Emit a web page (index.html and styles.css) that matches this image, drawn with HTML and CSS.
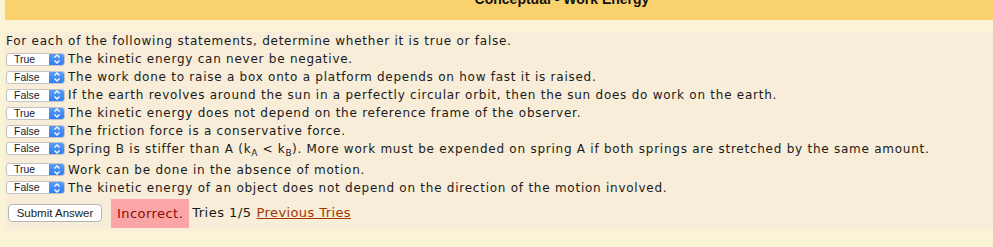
FILE: index.html
```html
<!DOCTYPE html>
<html>
<head>
<meta charset="utf-8">
<link rel="stylesheet" href="styles.css">
</head>
<body>
<div class="header"><h1>Conceptual - Work Energy</h1></div>
<div class="panel">
  <div class="intro">For each of the following statements, determine whether it is true or false.</div>
  <div class="row"><span class="sel"><span class="val">True</span><span class="arr"><svg viewBox="0 0 8 12" width="8" height="12"><path d="M1.5 4.5 L4 2 L6.5 4.5 M1.5 7.5 L4 10 L6.5 7.5" fill="none" stroke="#fff" stroke-width="1.3"/></svg></span></span><span class="txt">The kinetic energy can never be negative.</span></div>
  <div class="row"><span class="sel"><span class="val">False</span><span class="arr"><svg viewBox="0 0 8 12" width="8" height="12"><path d="M1.5 4.5 L4 2 L6.5 4.5 M1.5 7.5 L4 10 L6.5 7.5" fill="none" stroke="#fff" stroke-width="1.3"/></svg></span></span><span class="txt">The work done to raise a box onto a platform depends on how fast it is raised.</span></div>
  <div class="row"><span class="sel"><span class="val">False</span><span class="arr"><svg viewBox="0 0 8 12" width="8" height="12"><path d="M1.5 4.5 L4 2 L6.5 4.5 M1.5 7.5 L4 10 L6.5 7.5" fill="none" stroke="#fff" stroke-width="1.3"/></svg></span></span><span class="txt">If the earth revolves around the sun in a perfectly circular orbit, then the sun does do work on the earth.</span></div>
  <div class="row"><span class="sel"><span class="val">True</span><span class="arr"><svg viewBox="0 0 8 12" width="8" height="12"><path d="M1.5 4.5 L4 2 L6.5 4.5 M1.5 7.5 L4 10 L6.5 7.5" fill="none" stroke="#fff" stroke-width="1.3"/></svg></span></span><span class="txt">The kinetic energy does not depend on the reference frame of the observer.</span></div>
  <div class="row"><span class="sel"><span class="val">False</span><span class="arr"><svg viewBox="0 0 8 12" width="8" height="12"><path d="M1.5 4.5 L4 2 L6.5 4.5 M1.5 7.5 L4 10 L6.5 7.5" fill="none" stroke="#fff" stroke-width="1.3"/></svg></span></span><span class="txt">The friction force is a conservative force.</span></div>
  <div class="row row-sub"><span class="sel"><span class="val">False</span><span class="arr"><svg viewBox="0 0 8 12" width="8" height="12"><path d="M1.5 4.5 L4 2 L6.5 4.5 M1.5 7.5 L4 10 L6.5 7.5" fill="none" stroke="#fff" stroke-width="1.3"/></svg></span></span><span class="txt">Spring B is stiffer than A (k<sub>A</sub> &lt; k<sub>B</sub>). More work must be expended on spring A if both springs are stretched by the same amount.</span></div>
  <div class="row"><span class="sel"><span class="val">True</span><span class="arr"><svg viewBox="0 0 8 12" width="8" height="12"><path d="M1.5 4.5 L4 2 L6.5 4.5 M1.5 7.5 L4 10 L6.5 7.5" fill="none" stroke="#fff" stroke-width="1.3"/></svg></span></span><span class="txt">Work can be done in the absence of motion.</span></div>
  <div class="row"><span class="sel"><span class="val">False</span><span class="arr"><svg viewBox="0 0 8 12" width="8" height="12"><path d="M1.5 4.5 L4 2 L6.5 4.5 M1.5 7.5 L4 10 L6.5 7.5" fill="none" stroke="#fff" stroke-width="1.3"/></svg></span></span><span class="txt">The kinetic energy of an object does not depend on the direction of the motion involved.</span></div>
  <div class="submit-row">
    <span class="btn">Submit Answer</span>
    <span class="incorrect">Incorrect.</span>
    <span class="tries">Tries 1/5</span>
    <a class="prev" href="#">Previous Tries</a>
  </div>
</div>
</body>
</html>
```
FILE: styles.css
```css
body {
  margin: 0;
  background: #fbf3d6;
  font-family: "DejaVu Sans", Verdana, sans-serif;
  font-size: 12px;
  color: #1a1a1a;
  overflow: hidden;
}
.header {
  margin-left: 5px;
  height: 20px;
  background: #f9d26e;
  overflow: hidden;
  padding-left: 126px;
  text-align: center;
}
.header h1 {
  margin: -8px 0 0;
  font: 700 14px/15px "Liberation Sans", Arial, sans-serif;
  color: #111;
}
.panel {
  margin-top: 12px;
  margin-left: 5px;
  background: #f7edd8;
  line-height: 18px;
  padding-bottom: 1px;
}
.intro, .txt {
  letter-spacing: 0.75px;
  padding-left: 1px;
}
.row {
  display: flex;
  align-items: center;
  height: 18px;
}
.row-sub {
  height: 19px;
  margin-bottom: 1.5px;
  align-items: flex-start;
}
.row-sub .sel { margin-top: 2px; }
.row sub {
  font-size: 9px;
  line-height: 0;
  letter-spacing: 0.3px;
}
.sel {
  display: inline-flex;
  box-sizing: border-box;
  width: 59px;
  height: 13px;
  margin-left: 1px;
  margin-right: 2px;
  border: 1px solid #c4c4c4;
  border-radius: 3px;
  background: #fff;
  overflow: hidden;
  flex: none;
}
.val {
  flex: 1;
  font: 10.5px/11px "Liberation Sans", Arial, sans-serif;
  padding-left: 7px;
  color: #222;
}
.arr {
  width: 15px;
  background: linear-gradient(#5a9cf8, #2f7ef3);
  display: flex;
  align-items: center;
  justify-content: center;
}
.arr svg { display: block; }
.txt { white-space: nowrap; }
.submit-row {
  display: flex;
  align-items: center;
  height: 31px;
  margin-top: 1px;
}
.btn {
  box-sizing: border-box;
  margin-left: 3px;
  width: 94px;
  height: 18px;
  border: 1px solid #b5b5b5;
  border-radius: 4px;
  background: #fff;
  font: 11.5px/16px "Liberation Sans", Arial, sans-serif;
  text-align: center;
  color: #222;
}
.incorrect {
  margin-left: 9px;
  background: #fba6a6;
  color: #8b0a0a;
  font-size: 13px;
  letter-spacing: 0.45px;
  line-height: 29px;
  padding: 0 6px;
}
.tries {
  margin-left: 3px;
  font-size: 13px;
  letter-spacing: 0.5px;
}
.prev {
  margin-left: 5px;
  font-size: 13px;
  letter-spacing: 0.4px;
  color: #a33600;
}
```
